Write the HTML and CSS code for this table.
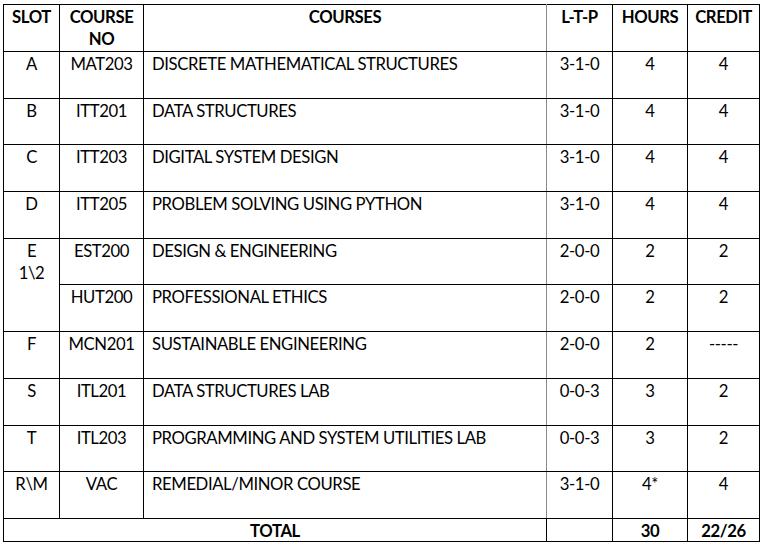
FILE: index.html
```html
<!DOCTYPE html>
<html lang="en">
<head>
<meta charset="utf-8">
<title>Course Schedule</title>
<link rel="stylesheet" href="styles.css">
</head>
<body>
<table class="timetable">
  <colgroup>
    <col class="c-slot">
    <col class="c-no">
    <col class="c-course">
    <col class="c-ltp">
    <col class="c-hours">
    <col class="c-credit">
  </colgroup>
  <thead>
    <tr class="head">
      <th>SLOT</th>
      <th>COURSE<br>NO</th>
      <th class="course">COURSES</th>
      <th>L-T-P</th>
      <th>HOURS</th>
      <th>CREDIT</th>
    </tr>
  </thead>
  <tbody>
    <tr class="row">
      <td>A</td><td>MAT203</td><td class="course name">DISCRETE MATHEMATICAL STRUCTURES</td><td>3-1-0</td><td>4</td><td>4</td>
    </tr>
    <tr class="row">
      <td>B</td><td>ITT201</td><td class="course name">DATA STRUCTURES</td><td>3-1-0</td><td>4</td><td>4</td>
    </tr>
    <tr class="row">
      <td>C</td><td>ITT203</td><td class="course name">DIGITAL SYSTEM DESIGN</td><td>3-1-0</td><td>4</td><td>4</td>
    </tr>
    <tr class="row">
      <td>D</td><td>ITT205</td><td class="course name">PROBLEM SOLVING USING PYTHON</td><td>3-1-0</td><td>4</td><td>4</td>
    </tr>
    <tr class="row">
      <td rowspan="2">E<br>1\2</td><td>EST200</td><td class="course name">DESIGN &amp; ENGINEERING</td><td>2-0-0</td><td>2</td><td>2</td>
    </tr>
    <tr class="row">
      <td>HUT200</td><td class="course name">PROFESSIONAL ETHICS</td><td>2-0-0</td><td>2</td><td>2</td>
    </tr>
    <tr class="row">
      <td>F</td><td>MCN201</td><td class="course name">SUSTAINABLE ENGINEERING</td><td>2-0-0</td><td>2</td><td>-----</td>
    </tr>
    <tr class="row">
      <td>S</td><td>ITL201</td><td class="course name">DATA STRUCTURES LAB</td><td>0-0-3</td><td>3</td><td>2</td>
    </tr>
    <tr class="row">
      <td>T</td><td>ITL203</td><td class="course name">PROGRAMMING AND SYSTEM UTILITIES LAB</td><td>0-0-3</td><td>3</td><td>2</td>
    </tr>
    <tr class="row">
      <td>R\M</td><td>VAC</td><td class="course name">REMEDIAL/MINOR COURSE</td><td>3-1-0</td><td>4*</td><td>4</td>
    </tr>
    <tr class="total">
      <td colspan="3">TOTAL</td><td></td><td>30</td><td>22/26</td>
    </tr>
  </tbody>
</table>
</body>
</html>
```

FILE: styles.css
```css
html, body {
  margin: 0;
  background: #fff;
}

body {
  padding: 4px 0 0 3px;
  font-family: Lato, "Liberation Sans", sans-serif;
  font-size: 16.7px;
  line-height: 22px;
  letter-spacing: -0.4px;
  color: #000;
}

.timetable {
  border-collapse: collapse;
  table-layout: fixed;
  width: 757px;
}

.c-slot { width: 56px; }
.c-no { width: 84px; }
.c-course { width: 403px; }
.c-ltp { width: 66px; }
.c-hours { width: 75px; }
.c-credit { width: 72px; }

.timetable th,
.timetable td {
  border: 1px solid #000;
  padding: 1px 0 0 0;
  vertical-align: top;
  text-align: center;
  white-space: nowrap;
}

.timetable th {
  font-weight: 700;
}

.timetable .course {
  border-right-color: #8a8a8a;
}

.timetable .name {
  text-align: left;
  padding-left: 8px;
}

.head {
  height: 47px;
}

.row {
  height: 46.7px;
}

.total {
  height: 23px;
}

.total td {
  font-weight: 700;
  line-height: 19px;
  padding-top: 3px;
  border-right-color: #000;
}
```
